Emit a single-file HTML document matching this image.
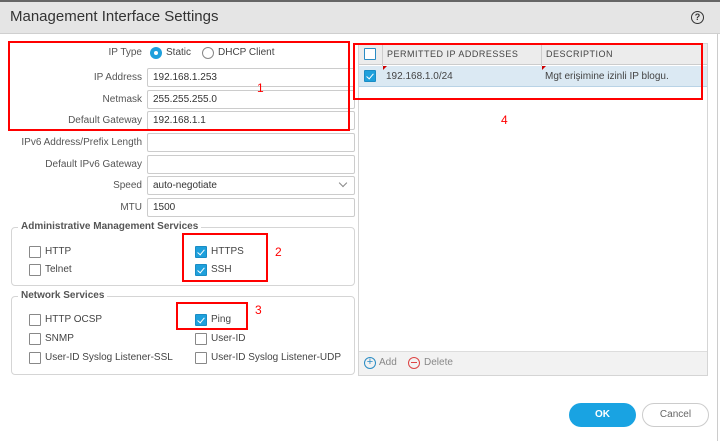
<!DOCTYPE html>
<html><head><meta charset="utf-8"><style>
*{box-sizing:border-box;margin:0;padding:0}
body{width:720px;height:441px;background:#fff;font-family:"Liberation Sans",sans-serif;position:relative;overflow:hidden;color:#333}
.a{position:absolute}
.hdr{left:0;top:0;width:720px;height:34px;background:#e5e5e5;border-top:2px solid #666;border-bottom:1px solid #cfcfcf}
.title{left:10px;top:8px;font-size:15px;color:#333}
.lbl{position:absolute;right:578px;font-size:10px;color:#555;text-align:right;white-space:nowrap}
.inp{position:absolute;left:147px;width:208px;height:19px;border:1px solid #ccc;border-radius:2px;font-size:10px;color:#333;padding:0 5px;line-height:17px}
.red{position:absolute;border:2px solid #f00}
.rn{position:absolute;color:#f00;font-size:12px}
.fs{position:absolute;border:1px solid #d5d5d5;border-radius:4px}
.lg{position:absolute;background:#fff;font-size:10px;color:#555;padding:0 3px;font-weight:bold}
.cb{position:absolute;width:12px;height:12px;border:1px solid #888;border-radius:1px;background:#fff}
.cb.on{background:#1ea0dc;border-color:#1a8cc4}
.cb.on:after{content:"";position:absolute;left:3px;top:1px;width:3px;height:6px;border:solid #fff;border-width:0 1px 1px 0;transform:rotate(40deg)}
.ct{position:absolute;font-size:10px;color:#444;white-space:nowrap}
</style></head><body>
<div class="a hdr"></div>
<div class="a title">Management Interface Settings</div>
<div class="a" style="left:691px;top:11px;width:13px;height:13px;border:1.5px solid #333;border-radius:50%;font-size:9px;font-weight:bold;text-align:center;line-height:10px">?</div>
<div class="a" style="left:717px;top:34px;width:1px;height:407px;background:#ccc"></div>

<div class="lbl" style="top:47px">IP Type</div>
<div class="a" style="left:150px;top:47px;width:12px;height:12px;border-radius:50%;background:#1ea0dc"></div>
<div class="a" style="left:154px;top:51px;width:4px;height:4px;border-radius:50%;background:#fff"></div>
<div class="ct" style="left:166px;top:47px">Static</div>
<div class="a" style="left:202px;top:47px;width:12px;height:12px;border-radius:50%;border:1px solid #888"></div>
<div class="ct" style="left:218px;top:47px">DHCP Client</div>

<div class="lbl" style="top:72px">IP Address</div><div class="inp" style="top:68px">192.168.1.253</div>
<div class="lbl" style="top:94px">Netmask</div><div class="inp" style="top:90px">255.255.255.0</div>
<div class="lbl" style="top:115px">Default Gateway</div><div class="inp" style="top:111px">192.168.1.1</div>
<div class="lbl" style="top:137px">IPv6 Address/Prefix Length</div><div class="inp" style="top:133px"></div>
<div class="lbl" style="top:159px">Default IPv6 Gateway</div><div class="inp" style="top:155px"></div>
<div class="lbl" style="top:180px">Speed</div><div class="inp" style="top:176px">auto-negotiate</div>
<div class="a" style="left:340px;top:180px;width:6px;height:6px;border:solid #888;border-width:0 1px 1px 0;transform:rotate(45deg)"></div>
<div class="lbl" style="top:202px">MTU</div><div class="inp" style="top:198px">1500</div>

<div class="red" style="left:8px;top:41px;width:342px;height:90px"></div>
<div class="rn" style="left:257px;top:81px">1</div>

<div class="fs" style="left:11px;top:227px;width:344px;height:59px"></div>
<div class="lg" style="left:18px;top:221px">Administrative Management Services</div>
<div class="cb" style="left:29px;top:246px"></div><div class="ct" style="left:45px;top:246px">HTTP</div>
<div class="cb" style="left:29px;top:264px"></div><div class="ct" style="left:45px;top:264px">Telnet</div>
<div class="cb on" style="left:195px;top:246px"></div><div class="ct" style="left:211px;top:246px">HTTPS</div>
<div class="cb on" style="left:195px;top:264px"></div><div class="ct" style="left:211px;top:264px">SSH</div>
<div class="red" style="left:182px;top:233px;width:86px;height:49px"></div>
<div class="rn" style="left:275px;top:245px">2</div>

<div class="fs" style="left:11px;top:296px;width:344px;height:79px"></div>
<div class="lg" style="left:18px;top:290px">Network Services</div>
<div class="cb" style="left:29px;top:314px"></div><div class="ct" style="left:45px;top:314px">HTTP OCSP</div>
<div class="cb" style="left:29px;top:333px"></div><div class="ct" style="left:45px;top:333px">SNMP</div>
<div class="cb" style="left:29px;top:352px"></div><div class="ct" style="left:45px;top:352px">User-ID Syslog Listener-SSL</div>
<div class="cb on" style="left:195px;top:314px"></div><div class="ct" style="left:211px;top:314px">Ping</div>
<div class="cb" style="left:195px;top:333px"></div><div class="ct" style="left:211px;top:333px">User-ID</div>
<div class="cb" style="left:195px;top:352px"></div><div class="ct" style="left:211px;top:352px">User-ID Syslog Listener-UDP</div>
<div class="red" style="left:176px;top:302px;width:72px;height:28px"></div>
<div class="rn" style="left:255px;top:303px">3</div>

<div class="a" style="left:358px;top:43px;width:350px;height:333px;border:1px solid #d5d5d5"></div>
<div class="a" style="left:359px;top:44px;width:348px;height:21px;background:#ececec;border-bottom:1px solid #ccc"></div>
<div class="a" style="left:382px;top:44px;width:1px;height:42px;background:#ccc"></div>
<div class="a" style="left:541px;top:44px;width:1px;height:42px;background:#ccc"></div>
<div class="cb" style="left:364px;top:48px;border-color:#2a8cc4"></div>
<div class="ct" style="left:387px;top:49px;font-size:9px;letter-spacing:.5px">PERMITTED IP ADDRESSES</div>
<div class="ct" style="left:546px;top:49px;font-size:9px;letter-spacing:.5px">DESCRIPTION</div>
<div class="a" style="left:359px;top:66px;width:348px;height:21px;background:#dbe9f3;border-bottom:1px solid #b9d3e6"></div>
<div class="cb on" style="left:364px;top:70px"></div>
<div class="a" style="left:383px;top:66px;width:0;height:0;border-top:4px solid #c00;border-right:4px solid transparent"></div>
<div class="a" style="left:542px;top:66px;width:0;height:0;border-top:4px solid #c00;border-right:4px solid transparent"></div>
<div class="ct" style="left:386px;top:71px">192.168.1.0/24</div>
<div class="ct" style="left:545px;top:71px">Mgt erişimine izinli IP blogu.</div>
<div class="red" style="left:353px;top:43px;width:350px;height:57px"></div>
<div class="rn" style="left:501px;top:113px">4</div>

<div class="a" style="left:359px;top:351px;width:348px;height:24px;background:#f2f2f2;border-top:1px solid #ddd"></div>
<div class="a" style="left:364px;top:357px;width:12px;height:12px;border:1px solid #2a8cc4;border-radius:50%;color:#2a8cc4;font-size:11px;line-height:9px;text-align:center">+</div>
<div class="ct" style="left:379px;top:357px;color:#888">Add</div>
<div class="a" style="left:408px;top:357px;width:12px;height:12px;border:1px solid #d44;border-radius:50%"></div>
<div class="a" style="left:411px;top:362px;width:6px;height:1px;background:#d44"></div>
<div class="ct" style="left:424px;top:357px;color:#888">Delete</div>

<div class="a" style="left:569px;top:403px;width:67px;height:24px;border-radius:12px;background:#19a3e2;color:#fff;font-size:10px;font-weight:bold;text-align:center;line-height:24px">OK</div>
<div class="a" style="left:642px;top:403px;width:67px;height:24px;border-radius:12px;border:1px solid #ccc;color:#666;font-size:10px;text-align:center;line-height:22px">Cancel</div>
</body></html>
